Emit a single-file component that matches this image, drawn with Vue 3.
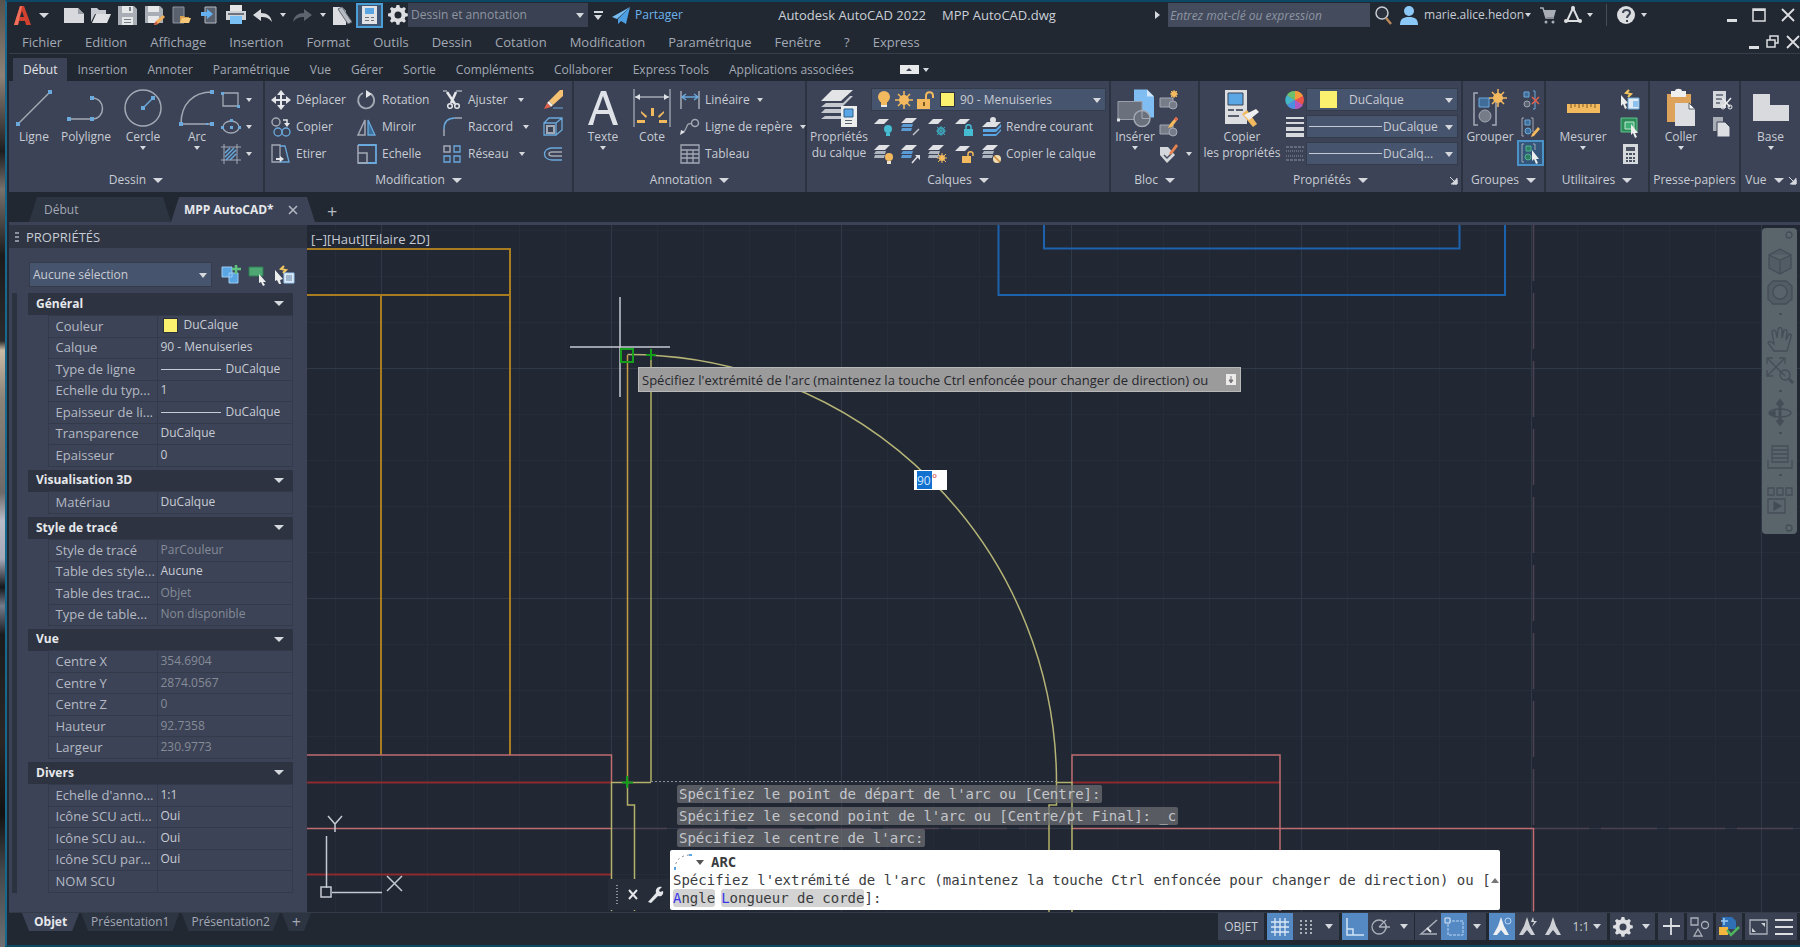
<script setup>
import { h } from 'vue'

const G = '#a3a9b4'
const B = '#6aa9dc'
const O = '#f3b95f'
const sheets = (c = '#aeb6c0') =>
  `<path d="M5 1h11l-5 5H0z" fill="#dfe1e4"/><path d="M2 7h10l-1 3H0zM1 11h10l-1 3H0z" fill="${c}"/>`
const one = '<path d="M5 2h10l-5 5H0z" fill="#dfe1e4"/>'
const person = 'M9 0l3 9 5 9h-4l-4-5-4 5H1l5-9z'
const gear = (c, hole) =>
  `<path d="M8 0h3l.6 2.6 2 .8L16 2l2 2-1.4 2.4.8 2 2.6.6v3l-2.6.6-.8 2L18 17l-2 2-2.4-1.4-2 .8L11 21H8l-.6-2.6-2-.8L3 19l-2-2 1.4-2.4-.8-2L-1 12V9l2.6-.6.8-2L1 4l2-2 2.4 1.4 2-.8z" transform="translate(1 0) scale(.94)" fill="${c}"/><circle cx="10" cy="10" r="3.5" fill="${hole}"/>`

const icons = {
  logo: [17, 19, '<path d="M0 19L6 0h4l7 19h-5l-1-4H5l-1 4zM6 11h4L8 5z" fill="#d2402f"/><path d="M6 0h2L4 19H0z" fill="#f0705c"/>'],
  new: [20, 17, '<path d="M0 1h14l6 6v9H0z" fill="#d8d9dc"/><path d="M14 1v6h6z" fill="#9b9fa8"/>'],
  open: [20, 17, '<path d="M0 1h6l2 2h7v4H4L0 15z" fill="#c7cad0"/><path d="M5 7h15l-4 9H1z" fill="#dfe0e3"/>'],
  save: [19, 19, '<path d="M0 0h16l3 3v16H0z" fill="#a9adb5"/><path d="M4 0h11v7H4z" fill="#e6e7e9"/><path d="M4 11h11v8H4z" fill="#e6e7e9"/><path d="M6 13h7v1H6zM6 16h7v1H6zM11 1h2v4h-2z" fill="#767c88"/>'],
  saveas: [20, 19, '<path d="M0 0h15l3 3v14H0z" fill="#a9adb5"/><path d="M3 0h11v6H3z" fill="#e6e7e9"/><path d="M3 10h11v7H3z" fill="#e6e7e9"/><path d="M18 9l2 2-7 7-4 1 2-4z" fill="#f0b05c"/><path d="M11 15l-2 4 4-1z" fill="#d0584a"/>'],
  mopen: [19, 18, '<path d="M1 1h11v16H1z" fill="#59616f" stroke="#8d939e"/><path d="M8 10h4l1 1h4v6H8z" fill="#d9a24e"/><path d="M10 12h9l-2 5H8z" fill="#f7c877"/>'],
  msave: [16, 18, '<path d="M4 1h11v16H4z" fill="#59616f" stroke="#b5bac2"/><path d="M0 6h6V3l6 5-6 5v-3H0z" fill="#63b1f0"/>'],
  print: [20, 20, '<path d="M4 0h12v6H4z" fill="#e3e4e6"/><path d="M0 6h20v9H0z" fill="#cfd1d5"/><path d="M4 11h12v8H4z" fill="#79c0f5"/><path d="M2 8h16v2H2z" fill="#6b7280"/>'],
  undo: [19, 13, '<path d="M8 0v4c6 0 10 3 11 9-3-4-6-5-11-5v4L0 6z" fill="#d8dadd"/>'],
  redo: [19, 13, '<path d="M11 0v4C5 4 1 7 0 13c3-4 6-5 11-5v4l8-6z" fill="#5d6470"/>'],
  sheet: [19, 19, '<path d="M0 1h9l4 4v14H0z" fill="#dcdde0"/><path d="M5 3l4-2 10 15-4 2z" fill="#b6bac1" stroke="#5f6673"/>'],
  toggle: [15, 18, '<path d="M0 0h15v18H0z" fill="#e0e2e5"/><path d="M3 2h9v6H3z" fill="#5aa6e4"/><path d="M3 11h4v1H3zM3 14h4v1H3zM9 11h3v1H9zM9 14h3v1H9z" fill="#69717f"/>'],
  gear: [20, 20, gear('#dcdee1', '#212832')],
  plane: [18, 17, '<path d="M18 0L0 10l5 2z" fill="#78bdf2"/><path d="M18 0L6 12v5l3-3 5 3z" fill="#4c9fe2"/>'],
  search: [17, 19, '<circle cx="7" cy="7" r="6" fill="#2b323e" stroke="#c9ccd2" stroke-width="1.5"/><path d="M11 12l5 6" stroke="#b9875a" stroke-width="2.5"/>'],
  user: [18, 19, '<circle cx="9" cy="5" r="5" fill="#8cc8f7"/><path d="M0 19c0-6 3-8 9-8s9 2 9 8z" fill="#8cc8f7"/>'],
  cart: [16, 17, '<path d="M0 1h3l3 10h8" fill="none" stroke="#a9adb5" stroke-width="1.5"/><path d="M3 3h13l-2 7H6z" fill="#a9adb5"/><circle cx="6" cy="15" r="1.5" fill="#a9adb5"/><circle cx="13" cy="15" r="1.5" fill="#a9adb5"/>'],
  tri: [18, 18, '<path d="M9 2L3 15h12z" fill="none" stroke="#dcdee1" stroke-width="2"/><circle cx="9" cy="2" r="2" fill="#dcdee1"/><circle cx="2" cy="15" r="2" fill="#dcdee1"/><circle cx="16" cy="15" r="2" fill="#dcdee1"/>'],
  help: [19, 19, '<circle cx="9" cy="9" r="9" fill="#dcdde0"/><path d="M6 7c0-4 7-4 7 0 0 2-3 2-3 5M10 14v2" fill="none" stroke="#3a4250" stroke-width="2"/>'],
  min: [10, 14, '<path d="M0 11h10v3H0z" fill="#dcdee1"/>'],
  max: [14, 14, '<path d="M1 1h12v12H1z" fill="none" stroke="#dcdee1" stroke-width="1.5"/><path d="M1 1h12v2H1z" fill="#dcdee1"/>'],
  close: [14, 14, '<path d="M1 1l12 12M13 1L1 13" stroke="#dcdee1" stroke-width="1.8"/>'],
  restore: [13, 13, '<path d="M4 5V1h8v7H9M1 5h8v7H1z" fill="none" stroke="#dcdee1" stroke-width="1.5"/>'],
  cam: [19, 9, '<path d="M0 0h19v9H0z" fill="#e8e9eb"/><path d="M9 3l3 3H6z" fill="#3a4250"/>'],
  line: [38, 38, `<path d="M3 35L35 3" stroke="${G}" stroke-width="1.5"/><path d="M1 33h4v4H1zM33 1h4v4h-4z" fill="${B}"/>`],
  pline: [38, 38, `<path d="M2 30h23c14 0 14-21 0-21" fill="none" stroke="${G}" stroke-width="1.5"/><path d="M0 28h4v4H0zM23 28h4v4h-4zM23 7h4v4h-4z" fill="${B}"/>`],
  circle: [38, 38, `<circle cx="19" cy="19" r="18" fill="none" stroke="${G}" stroke-width="1.5"/><path d="M19 19L29 9" stroke="${B}" stroke-width="1.5"/><path d="M17 17h4v4h-4zM27 7h4v4h-4z" fill="${B}"/>`],
  arc: [36, 38, `<path d="M2 35C2 15 14 3 33 3M2 35h31" fill="none" stroke="${G}" stroke-width="1.5"/><path d="M0 33h4v4H0zM31 1h4v4h-4zM31 33h4v4h-4zM27 34h2v2h-2z" fill="${B}"/>`],
  rect: [20, 18, `<path d="M2 2h15v13H2z" fill="none" stroke="${G}" stroke-width="1.3"/><path d="M0 1h3v3H0zM16 14h3v3h-3z" fill="${B}"/>`],
  ell: [20, 18, `<ellipse cx="10" cy="9" rx="8" ry="6" fill="none" stroke="${G}" stroke-width="1.3"/><path d="M9 8h3v3H9zM0 8h3v3H0zM17 8h3v3h-3zM9 1h3v3H9z" fill="${B}"/>`],
  hatch: [20, 20, `<path d="M3 0v20M16 0v20M0 3h20M0 16h20" stroke="${G}"/><path d="M4 9l5-5M4 13l9-9M5 16l10-10M9 16l6-6" stroke="${B}" stroke-width="1.5"/>`],
  move: [20, 20, '<path d="M10 0l4 5h-3v4h4V6l5 4-5 4v-3h-4v4h3l-4 5-4-5h3v-4H5v3l-5-4 5-4v3h4V5H6z" fill="#e4e6e9"/>'],
  copy: [20, 20, `<circle cx="5" cy="5" r="4" fill="none" stroke="${G}" stroke-width="1.5"/><path d="M12 3h4v4" fill="none" stroke="#e4e6e9" stroke-width="1.5"/><path d="M13 6h6l-3 4z" fill="#e4e6e9"/><circle cx="7" cy="15" r="4" fill="none" stroke="${B}" stroke-width="1.3"/><circle cx="15" cy="15" r="4" fill="none" stroke="${B}" stroke-width="1.3"/>`],
  stretch: [20, 20, `<path d="M1 1h8v17H1z" fill="none" stroke="${G}" stroke-width="1.3"/><path d="M9 2h5l4 16H9" fill="none" stroke="${B}" stroke-width="1.3"/><path d="M5 14h4v-2l4 3-4 3v-2H5z" fill="#e4e6e9"/>`],
  rotate: [20, 20, `<path d="M14 4a8 8 0 1 1-8-1" fill="none" stroke="${G}" stroke-width="1.8"/><path d="M9 0l6 4-6 4z" fill="#e4e6e9"/>`],
  mirror: [20, 20, `<path d="M8 3v15H1z" fill="none" stroke="${G}" stroke-width="1.5"/><path d="M11 3v15h7z" fill="#3b6f9c" stroke="${B}" stroke-width="1.3"/>`],
  scale: [20, 20, `<path d="M1 1h18v18H1" fill="none" stroke="${B}" stroke-width="1.8"/><path d="M1 1v8M1 9h9v10H1z" fill="none" stroke="${G}" stroke-width="1.5"/>`],
  trim: [20, 20, `<path d="M0 1h4M13 1h6" stroke="${G}" stroke-width="1.5"/><path d="M4 2l8 12M13 2L8 13" stroke="#e4e6e9" stroke-width="2.5"/><circle cx="7" cy="16" r="2.3" fill="none" stroke="#e4e6e9" stroke-width="1.5"/><circle cx="14" cy="16" r="2.3" fill="none" stroke="#e4e6e9" stroke-width="1.5"/>`],
  fillet: [20, 20, `<path d="M1 12C1 5 5 1 12 1" fill="none" stroke="${B}" stroke-width="1.5"/><path d="M12 1h7M1 12v7" stroke="${G}" stroke-width="1.5"/>`],
  array: [20, 20, `<path d="M1 2h6v6H1z" fill="none" stroke="${G}" stroke-width="1.5"/><path d="M11 2h6v6h-6zM1 12h6v6H1zM11 12h6v6h-6z" fill="none" stroke="${B}" stroke-width="1.3"/>`],
  erase: [20, 20, '<path d="M17 0h3v6L10 15l-4-4z" fill="#f5c273"/><path d="M6 11l4 4-2 2-4-4z" fill="#f2e9df"/><path d="M4 13l4 4-7 2z" fill="#e0604c"/><path d="M10 18h10" stroke="#6aa9dc"/>'],
  box: [20, 20, `<path d="M1 6h12v12H1zM1 6l5-5h13v12l-6 5M13 6l6-5" fill="none" stroke="${B}" stroke-width="1.3"/><path d="M4 9h7v7H4z" fill="none" stroke="${G}" stroke-width="2"/>`],
  offset: [20, 16, `<path d="M19 2H9c-10 0-10 12 0 12h10" fill="none" stroke="${B}" stroke-width="1.3"/><path d="M19 6H9c-4 0-4 4 0 4h10" fill="none" stroke="${G}" stroke-width="1.5"/>`],
  bigA: [30, 36, '<path d="M0 35L13 1h5l12 34h-5l-4-11H8L5 35zM10 20h10L15 6z" fill="#dfe2e6"/>'],
  dim: [38, 38, `<path d="M1 0v38M37 0v38M2 8h34" stroke="${G}" stroke-width="1.3"/><path d="M2 8l5-3v6zM36 8l-5-3v6z" fill="#dfe2e6"/><path d="M18 19h3v8h-3zM8 22l6 5-1 2-5-5zM31 22l-6 5 1 2 5-5zM4 31h8v3H4zM26 31h8v3h-8z" fill="${O}"/>`],
  linear: [20, 20, `<path d="M1 1v18M19 1v18" stroke="${G}" stroke-width="1.5"/><path d="M2 7h16M6 4L2 7l4 3M14 4l4 3-4 3" fill="none" stroke="${B}" stroke-width="1.5"/>`],
  leader: [20, 18, `<circle cx="15" cy="5" r="3.5" fill="none" stroke="${G}" stroke-width="1.5"/><path d="M12 6C5 4 8 12 3 14" fill="none" stroke="${G}" stroke-width="1.3"/><path d="M0 17l1-5 4 2z" fill="#dfe2e6"/>`],
  table: [20, 20, `<path d="M1 1h18v18H1zM1 6h18M1 10h18M1 14h18M7 6v13M13 6v13" fill="none" stroke="${G}" stroke-width="1.3"/>`],
  layers: [38, 38, '<path d="M12 1h21L21 12H1z" fill="#e3e4e6"/><path d="M6 14h17l7-7h3l-11 11H1zM5 20h19l-3 4H1zM5 27h16v3H1z" fill="#c5c9cf"/><path d="M21 17h16v21H21z" fill="#eceded"/><path d="M24 20h9v8h-9z" fill="#5ba7e5" stroke="#2c5e8b"/><path d="M25 31h7v1h-7zM25 34h7v1h-7z" fill="#59616f"/>'],
  bulb: [14, 18, `<circle cx="7" cy="6" r="6" fill="${O}"/><path d="M4 11h6v3H4z" fill="${O}"/><path d="M4 14h6v2H4z" fill="#e7e8ea"/>`],
  sun: [18, 18, `<circle cx="9" cy="9" r="5" fill="${O}"/><path d="M9 0v18M0 9h18M3 3l12 12M15 3L3 15" stroke="${O}" stroke-width="1.5"/>`],
  unlock: [18, 18, `<path d="M0 8h13v10H0z" fill="${O}"/><path d="M9 8V5c0-5 7-5 7 0v2" fill="none" stroke="${O}" stroke-width="2"/><path d="M6 11h2v4H6z" fill="#7a5a24"/>`],
  l1: [20, 20, one + '<circle cx="14" cy="12" r="4" fill="#45bcd2"/><path d="M12 16h4v3h-4z" fill="#45bcd2"/>'],
  l2: [20, 20, sheets('#5a9bd5') + '<path d="M12 18l6-6" stroke="#c5c9cf" stroke-width="1.5"/>'],
  l3: [20, 20, one + '<circle cx="13" cy="14" r="3" fill="none" stroke="#3d9fb4" stroke-width="2"/><path d="M13 9v10M8 14h10M9 10l8 8M17 10l-8 8" stroke="#3d9fb4"/>'],
  l4: [20, 20, one + '<path d="M9 12h9v7H9z" fill="#45bcd2"/><path d="M11 12v-2c0-3 5-3 5 0v2" fill="none" stroke="#45bcd2" stroke-width="1.5"/>'],
  l5: [20, 20, '<path d="M5 5h14l-5 5H0z" fill="#dfe1e4"/><path d="M1 12h13l5-5v3l-5 5H1zM1 17h13l5-5v2l-5 5H1z" fill="#5aa6e4"/><circle cx="11" cy="3" r="3" fill="#dfe1e4"/>'],
  l6: [20, 20, sheets() + `<circle cx="15" cy="13" r="4" fill="${O}"/><path d="M13 17h4v3h-4z" fill="#e9e2d3"/>`],
  l7: [20, 20, sheets('#5a9bd5') + '<path d="M11 19l6-7" stroke="#dfe1e4" stroke-width="1.5"/><path d="M14 11h5v5z" fill="#dfe1e4"/>'],
  l8: [20, 20, sheets() + `<circle cx="14" cy="14" r="3" fill="${O}"/><path d="M14 9v10M9 14h10M10 10l8 8M18 10l-8 8" stroke="${O}"/>`],
  l9: [20, 20, one + `<path d="M7 12h9v7H7z" fill="${O}"/><path d="M13 12v-2c0-3 5-3 5 0v2" fill="none" stroke="${O}" stroke-width="1.5"/>`],
  l10: [20, 20, sheets() + `<circle cx="15" cy="15" r="4" fill="#f2dcae"/><path d="M12 12l6 6" stroke="#c78b3a" stroke-width="1.5"/>`],
  insert: [37, 37, '<path d="M17 0h13l7 7v21H17z" fill="#7fbdf2"/><path d="M30 0v7h7z" fill="#cfe5f8"/><path d="M1 12h24v18H1z" fill="#6a707c" stroke="#9aa0aa"/><circle cx="25" cy="29" r="8" fill="#6a707c" stroke="#a3a9b4" stroke-width="1.5"/><path d="M25 29v-8M25 29h8" stroke="#a3a9b4"/><path d="M0 29h3v3H0z" fill="#dfe2e6"/>'],
  b1: [20, 20, `<path d="M1 8h13v9H1z" fill="#767c88" stroke="${G}"/><circle cx="14" cy="15" r="4" fill="#767c88" stroke="${G}"/><circle cx="15" cy="4" r="3" fill="${O}"/><path d="M15 0v8M11 4h8M12 1l6 6M18 1l-6 6" stroke="${O}"/>`],
  b2: [20, 20, `<path d="M1 8h13v9H1z" fill="#767c88" stroke="${G}"/><circle cx="14" cy="15" r="4" fill="#767c88" stroke="${G}"/><path d="M17 0l2 2-6 8-4 1 2-4z" fill="${O}"/><path d="M17 0l2 2-2 2-2-2z" fill="#e8634f"/>`],
  b3: [20, 20, `<path d="M1 3h8l7 8-8 8-7-8z" fill="#d4d7db"/><path d="M5 11l3 3 5-5" fill="none" stroke="#4a5160" stroke-width="1.5"/><path d="M17 0l2 2-6 8-3 1 1-3z" fill="#e8834f"/>`],
  props: [36, 38, `<path d="M1 1h22v34H1z" fill="#dcdee1"/><path d="M4 4h15v12H4z" fill="#5ba7e5" stroke="#3b4456"/><path d="M4 20h6v2H4zM12 20h7v2h-7zM4 26h11v2H4z" fill="#59616f"/><path d="M18 25l5-4 10 14-4 3z" fill="${O}"/><path d="M20 26l12-6 3 3-10 8z" fill="#efefef"/>`],
  wheel: [20, 20, '<circle cx="10" cy="10" r="9" fill="#e9534a"/><path d="M10 10V1a9 9 0 0 1 8 5z" fill="#f39a3d"/><path d="M10 10l8 5a9 9 0 0 1-8 4z" fill="#b05ac0"/><path d="M10 10v9a9 9 0 0 1-8-4z" fill="#4a90e2"/><path d="M10 10l-8 5a9 9 0 0 1 0-10z" fill="#43b6c9"/><path d="M10 10L2 5a9 9 0 0 1 8-4z" fill="#6cc06a"/>'],
  lw: [18, 20, '<path d="M0 0h18v2H0zM0 5h18v2H0zM0 10h18v4H0zM0 16h18v4H0z" fill="#d5d8dd"/>'],
  lt: [18, 16, '<path d="M0 1h18M0 14h18" stroke="#8d939e" stroke-dasharray="3 1"/><path d="M0 5h18M0 10h18" stroke="#8d939e" stroke-dasharray="1 1"/>'],
  group: [36, 38, `<path d="M6 4H2v32h4M20 36h4V12" fill="none" stroke="${G}" stroke-width="1.5"/><path d="M7 9h10v9H7z" fill="#3f6d98" stroke="#6aa9dc"/><circle cx="13" cy="27" r="6" fill="#767c88" stroke="${G}"/><circle cx="26" cy="9" r="5" fill="${O}"/><path d="M26 0v18M17 9h18M20 3l12 12M32 3L20 15" stroke="${O}" stroke-width="1.5"/>`],
  g1: [20, 20, `<path d="M3 2h5v5H3z" fill="#3f6d98" stroke="${B}"/><circle cx="6" cy="14" r="3" fill="#59616f" stroke="${G}"/><path d="M12 1h2v18h-2" fill="none" stroke="${B}"/><path d="M11 7l7 7M18 7l-7 7" stroke="#e0604c" stroke-width="1.5"/>`],
  g2: [20, 20, `<path d="M3 1H1v18h2M10 1h2v14" fill="none" stroke="${G}"/><path d="M4 3h5v5H4z" fill="#3f6d98" stroke="${B}"/><circle cx="7" cy="14" r="3" fill="#3f6d98" stroke="${B}"/><path d="M17 10l2 2-6 7-3 1 1-3z" fill="${O}"/>`],
  g3: [20, 20, `<path d="M3 1H1v18h2M12 1h2v6" fill="none" stroke="${G}"/><path d="M5 3h5v5H5z" fill="#2f7d66" stroke="#50b48d"/><circle cx="7" cy="14" r="3" fill="#2f7d66" stroke="#50b48d"/><path d="M11 7l7 9h-3l2 4-2 1-2-5-2 2z" fill="#eceded"/>`],
  ruler: [33, 38, `<path d="M0 15h33v9H0z" fill="${O}"/><path d="M4 15v4M8 15v3M12 15v4M16 15v3M20 15v4M24 15v3M28 15v4" stroke="#7d5a22"/>`],
  u1: [20, 20, '<path d="M9 0l-3 3 5 1-3 3" fill="none" stroke="#f3c75f" stroke-width="2"/><path d="M1 5l7 8-3 1 2 4-2 1-2-5-2 2z" fill="#eceded"/><path d="M8 8h11v11H8z" fill="#dfeaf5" stroke="#6aa9dc"/><path d="M13 11h5v6h-5z" fill="#8cc0ee"/>'],
  u2: [20, 20, '<path d="M1 1h16v14H1z" fill="#2f8a5a" stroke="#60c48d"/><path d="M5 5h9v7H5z" fill="#3fae75" stroke="#bfe8d0"/><path d="M11 7l7 9h-3l2 4-2 1-2-5-2 2z" fill="#eceded"/>'],
  calc: [15, 20, '<path d="M0 0h15v20H0z" fill="#d5d8dd"/><path d="M3 3h9v4H3zM3 9h2v2H3zM6 9h3v2H6zM10 9h2v2h-2zM3 13h2v2H3zM6 13h3v2H6zM10 13h2v2h-2zM3 16h2v2H3zM6 16h3v2H6zM10 16h2v2h-2z" fill="#4a5160"/>'],
  paste: [30, 38, `<path d="M1 5h24v28H1z" fill="#dda35a"/><path d="M5 2h4c0-3 7-3 7 0h4v6H5z" fill="#efefef"/><path d="M9 14h14l6 6v17H9z" fill="#dcdee1"/><path d="M23 14v6h6z" fill="#fff" stroke="#59616f"/>`],
  cut: [20, 20, `<path d="M1 1h13v17H1z" fill="#d5d8dd"/><path d="M4 5h7M4 9h7M4 13h4" stroke="#59616f" stroke-width="1.5"/><path d="M10 8l8 9M19 8l-8 9" stroke="#eceded" stroke-width="1.5"/><circle cx="11" cy="17" r="2" fill="none" stroke="#eceded"/><circle cx="18" cy="17" r="2" fill="none" stroke="#eceded"/>`],
  cpy: [18, 20, '<path d="M0 0h10v14H0z" fill="#a9adb5"/><path d="M4 5h8l5 5v10H4z" fill="#dcdee1" stroke="#3c4356"/>'],
  base: [38, 38, '<path d="M1 5h17v11h19v16H1z" fill="#d8dadd"/>'],
  corner: [8, 8, '<path d="M0 0l4 4M7 1v6H1M7 3v4H3z" fill="#d5d8dd" stroke="#d5d8dd"/>'],
  p1: [20, 20, '<path d="M1 2h10v10H1zM8 8h9v10H8z" fill="#5aa6e4" stroke="#9cccf4"/><path d="M15 0v9M11 4h9" stroke="#5fc47f" stroke-width="2.5"/>'],
  p2: [20, 20, '<path d="M1 2h14v9H1z" fill="#4fa873" stroke="#2f7d53"/><path d="M11 9l7 8h-3l2 3-2 1-2-4-2 1z" fill="#eceded"/>'],
  p3: [20, 20, '<path d="M9 1l-3 3 5 1-3 3" fill="none" stroke="#f3c75f" stroke-width="2"/><path d="M0 5l8 9-3 1 1 4H4l-2-4-2 1z" fill="#eceded"/><path d="M9 8h10v10H9z" fill="#dfeaf5" stroke="#9cccf4"/><path d="M11 11h6M11 13h6M11 15h6" stroke="#5a7fa5"/>'],
  wrench: [17, 17, '<path d="M1 16l8-9c-1-4 2-7 6-6l-3 3 1 2 3-1c1 4-2 6-5 5l-7 7z" fill="#e4e6e9"/>'],
  sgrid: [20, 20, '<path d="M5 1v18M10 1v18M15 1v18M1 5h18M1 10h18M1 15h18" stroke="#dce9f6" stroke-width="1.3"/>'],
  sdots: [18, 18, '<path d="M3 3h13M3 7h13M3 11h13M3 15h13" stroke="#aab0ba" stroke-width="2" stroke-dasharray="2 3"/>'],
  sortho: [20, 20, '<path d="M2 1v17h17M2 12h6v6" fill="none" stroke="#cfe2f5" stroke-width="1.5"/>'],
  spolar: [20, 20, '<circle cx="8" cy="10" r="7" fill="none" stroke="#aab0ba" stroke-width="1.3"/><path d="M8 10h11M8 10l7-7M15 8v4" stroke="#aab0ba" stroke-width="1.3"/>'],
  siso: [20, 20, '<path d="M19 3L3 17h16" fill="none" stroke="#aab0ba" stroke-width="1.5"/><path d="M9 11l4 4" stroke="#e4e6e9" stroke-width="2"/>'],
  ssnap: [20, 20, '<path d="M4 4h15v14H4z" fill="none" stroke="#b9d6f2" stroke-dasharray="3 1"/><path d="M1 1h5v5H1z" fill="#5b8fc9" stroke="#dce9f6"/>'],
  a1: [20, 20, `<path d="${person}" fill="#eef0f2"/><circle cx="16" cy="4" r="3" fill="none" stroke="#b9d6f2"/>`],
  a2: [20, 20, `<path d="${person}" fill="#cdd0d5"/><path d="M15 0l-2 5h3l-2 5 5-6h-3z" fill="#cdd0d5"/>`],
  a3: [20, 20, `<path d="${person}" fill="#cdd0d5"/>`],
  sgear: [20, 20, gear('#dcdee1', '#3b4253')],
  plus: [17, 17, '<path d="M8 0v17M0 8h17" stroke="#dcdee1" stroke-width="1.8"/>'],
  shapes: [20, 20, '<path d="M1 1h7v7H1zM8 12l4 7H4z" fill="none" stroke="#aab0ba" stroke-width="1.3"/><circle cx="15" cy="8" r="3.5" fill="none" stroke="#aab0ba" stroke-width="1.3"/>'],
  perf: [21, 21, '<path d="M3 1h10l4 4v8H3z" fill="#2f6fb5"/><path d="M2 5h7M5 2v7" stroke="#9cccf4" stroke-width="1.5"/><path d="M0 11h9v8H0z" fill="#f3b73f"/><path d="M8 14l4 5 8-8" fill="none" stroke="#4fb45f" stroke-width="2.5"/>'],
  expand: [19, 16, '<path d="M1 1h17v14H1z" fill="none" stroke="#aab0ba" stroke-width="1.3"/><path d="M12 4h4v4zM3 9v4h4z" fill="#cdd0d5"/>'],
  burger: [18, 18, '<path d="M0 1h18v2H0zM0 8h18v2H0zM0 15h18v2H0z" fill="#dcdee1"/>'],
}

const Ic = (p) => {
  const [w, ht, s] = icons[p.n]
  return h('svg', { width: w, height: ht, viewBox: `0 0 ${w} ${ht}`, 'aria-hidden': 'true', innerHTML: s })
}
Ic.props = ['n']

const qat = [
  ['new', 'Nouveau'], ['open', 'Ouvrir'], ['save', 'Enregistrer'], ['saveas', 'Enregistrer sous'],
  ['mopen', 'Ouvrir depuis le mobile'], ['msave', 'Enregistrer sur le mobile'], ['print', 'Tracer'],
]
const menus = ['Fichier', 'Edition', 'Affichage', 'Insertion', 'Format', 'Outils', 'Dessin', 'Cotation', 'Modification', 'Paramétrique', 'Fenêtre', '?', 'Express']
const tabs = ['Début', 'Insertion', 'Annoter', 'Paramétrique', 'Vue', 'Gérer', 'Sortie', 'Compléments', 'Collaborer', 'Express Tools', 'Applications associées']
const draw = [['line', 'Ligne', 0], ['pline', 'Polyligne', 0], ['circle', 'Cercle', 1], ['arc', 'Arc', 1]]
const modify = [
  ['move', 'Déplacer', 0], ['rotate', 'Rotation', 0], ['trim', 'Ajuster', 1], ['erase', '', 0],
  ['copy', 'Copier', 0], ['mirror', 'Miroir', 0], ['fillet', 'Raccord', 1], ['box', '', 0],
  ['stretch', 'Etirer', 0], ['scale', 'Echelle', 0], ['array', 'Réseau', 1], ['offset', '', 0],
]
const annot = [['linear', 'Linéaire', 1], ['leader', 'Ligne de repère', 1], ['table', 'Tableau', 0]]
const sections = [
  ['Général', [
    ['Couleur', 'DuCalque', 'swatch'], ['Calque', '90 - Menuiseries'], ['Type de ligne', 'DuCalque', 'rule'],
    ['Echelle du typ...', '1'], ['Epaisseur de li...', 'DuCalque', 'rule'], ['Transparence', 'DuCalque'], ['Epaisseur', '0'],
  ]],
  ['Visualisation 3D', [['Matériau', 'DuCalque']]],
  ['Style de tracé', [
    ['Style de tracé', 'ParCouleur', 'dim'], ['Table des style...', 'Aucune'],
    ['Table des trac...', 'Objet', 'dim'], ['Type de table...', 'Non disponible', 'dim'],
  ]],
  ['Vue', [
    ['Centre X', '354.6904', 'dim'], ['Centre Y', '2874.0567', 'dim'], ['Centre Z', '0', 'dim'],
    ['Hauteur', '92.7358', 'dim'], ['Largeur', '230.9773', 'dim'],
  ]],
  ['Divers', [
    ["Echelle d'anno...", '1:1'], ['Icône SCU acti...', 'Oui'], ['Icône SCU au...', 'Oui'],
    ['Icône SCU par...', 'Oui'], ['NOM SCU', ''],
  ]],
]
const history = [
  "Spécifiez le point de départ de l'arc ou [Centre]:",
  "Spécifiez le second point de l'arc ou [Centre/pt Final]: _c",
  "Spécifiez le centre de l'arc:",
]
</script>

<template>
  <div class="desk">
    <div class="win">
      <header class="title">
        <button class="logo" aria-label="Menu de l'application"><Ic n="logo" /><i class="ar" /></button>
        <button v-for="q in qat" :key="q[0]" class="q" :aria-label="q[1]"><Ic :n="q[0]" /></button>
        <button class="q" aria-label="Annuler"><Ic n="undo" /></button>
        <button class="qa" aria-label="Liste annuler"><i class="ar sm" /></button>
        <button class="q" aria-label="Rétablir"><Ic n="redo" /></button>
        <button class="qa" aria-label="Liste rétablir"><i class="ar sm" /></button>
        <button class="q" aria-label="Jeu de feuilles"><Ic n="sheet" /></button>
        <button class="q on" aria-label="Palette des propriétés"><Ic n="toggle" /></button>
        <span class="ws"><Ic n="gear" /></span>
        <span class="drop space"><select aria-label="Espace de travail"><option>Dessin et annotation</option></select><i class="ar" /></span>
        <button class="qa more" aria-label="Personnaliser"><i class="ar" /></button>
        <button class="share"><Ic n="plane" />Partager</button>
        <span class="name"><span>Autodesk AutoCAD 2022</span><span>MPP AutoCAD.dwg</span></span>
        <i class="rt" />
        <input class="find" type="text" placeholder="Entrez mot-clé ou expression" aria-label="Rechercher" />
        <button class="tb find-b" aria-label="Lancer la recherche"><Ic n="search" /></button>
        <button class="tb user"><Ic n="user" />marie.alice.hedon<i class="ar sm" /></button>
        <button class="tb" aria-label="Boutique"><Ic n="cart" /></button>
        <button class="tb" aria-label="Autodesk App Store"><Ic n="tri" /><i class="ar sm" /></button>
        <i class="vr" />
        <button class="tb" aria-label="Aide"><Ic n="help" /><i class="ar sm" /></button>
        <span class="wb">
          <button aria-label="Réduire"><Ic n="min" /></button>
          <button aria-label="Agrandir"><Ic n="max" /></button>
          <button aria-label="Fermer"><Ic n="close" /></button>
        </span>
      </header>

      <nav class="menu">
        <button v-for="m in menus" :key="m">{{ m }}</button>
        <span class="mdi">
          <button aria-label="Réduire le dessin"><Ic n="min" /></button>
          <button aria-label="Restaurer le dessin"><Ic n="restore" /></button>
          <button aria-label="Fermer le dessin"><Ic n="close" /></button>
        </span>
      </nav>

      <nav class="tabs">
        <button v-for="(t, i) in tabs" :key="t" :class="{ act: !i }">{{ t }}</button>
        <button class="cam" aria-label="Réduire le ruban"><Ic n="cam" /><i class="ar sm" /></button>
      </nav>

      <div class="ribbon">
        <section>
          <div class="body draw">
            <button v-for="d in draw" :key="d[0]" class="big"><Ic :n="d[0]" /><span>{{ d[1] }}</span><i v-if="d[2]" class="ar sm" /></button>
            <div class="stack">
              <button class="s" aria-label="Rectangle"><Ic n="rect" /><i class="ar sm" /></button>
              <button class="s" aria-label="Ellipse"><Ic n="ell" /><i class="ar sm" /></button>
              <button class="s" aria-label="Hachures"><Ic n="hatch" /><i class="ar sm" /></button>
            </div>
          </div>
          <footer>Dessin<i class="ar" /></footer>
        </section>

        <section>
          <div class="body mod">
            <button v-for="m in modify" :key="m[0]" class="s" :aria-label="m[1] || m[0]"><Ic :n="m[0]" /><span v-if="m[1]">{{ m[1] }}</span><i v-if="m[2]" class="ar sm" /></button>
          </div>
          <footer>Modification<i class="ar" /></footer>
        </section>

        <section>
          <div class="body ann">
            <button class="big"><Ic n="bigA" /><span>Texte</span><i class="ar sm" /></button>
            <button class="big"><Ic n="dim" /><span>Cote</span></button>
            <div class="stack">
              <button v-for="a in annot" :key="a[0]" class="s"><Ic :n="a[0]" /><span>{{ a[1] }}</span><i v-if="a[2]" class="ar sm" /></button>
            </div>
          </div>
          <footer>Annotation<i class="ar" /></footer>
        </section>

        <section>
          <div class="body lay">
            <button class="big"><Ic n="layers" /><span>Propriétés<br />du calque</span></button>
            <div class="stack">
              <span class="drop layer">
                <span class="over"><Ic n="bulb" /><Ic n="sun" /><Ic n="unlock" /><i class="sw" /></span>
                <select aria-label="Calque courant"><option>90 - Menuiseries</option></select><i class="ar" />
              </span>
              <div class="lr">
                <button v-for="n in 4" :key="n" :aria-label="'Outil de calque ' + n"><Ic :n="'l' + n" /></button>
                <button><Ic n="l5" />Rendre courant</button>
              </div>
              <div class="lr">
                <button v-for="n in 4" :key="n" :aria-label="'Outil de calque ' + (n + 4)"><Ic :n="'l' + (n + 5)" /></button>
                <button><Ic n="l10" />Copier le calque</button>
              </div>
            </div>
          </div>
          <footer>Calques<i class="ar" /></footer>
        </section>

        <section>
          <div class="body blk">
            <button class="big"><Ic n="insert" /><span>Insérer</span><i class="ar sm" /></button>
            <div class="stack">
              <button class="s" aria-label="Créer un bloc"><Ic n="b1" /></button>
              <button class="s" aria-label="Modifier le bloc"><Ic n="b2" /></button>
              <button class="s" aria-label="Attributs"><Ic n="b3" /><i class="ar sm" /></button>
            </div>
          </div>
          <footer>Bloc<i class="ar" /></footer>
        </section>

        <section>
          <div class="body prp">
            <button class="big"><Ic n="props" /><span>Copier<br />les propriétés</span></button>
            <div class="stack mid">
              <span><Ic n="wheel" /></span><span><Ic n="lw" /></span><span><Ic n="lt" /></span>
            </div>
            <div class="stack sel">
              <span class="drop c"><select aria-label="Couleur"><option>DuCalque</option></select><i class="ar" /></span>
              <span class="drop l"><select aria-label="Epaisseur de ligne"><option>DuCalque</option></select><i class="ar" /></span>
              <span class="drop l"><select aria-label="Type de ligne"><option>DuCalq...</option></select><i class="ar" /></span>
            </div>
          </div>
          <footer>Propriétés<i class="ar" /><button class="cn" aria-label="Ouvrir les propriétés"><Ic n="corner" /></button></footer>
        </section>

        <section>
          <div class="body grp">
            <button class="big"><Ic n="group" /><span>Grouper</span></button>
            <div class="stack">
              <button class="s" aria-label="Dissocier"><Ic n="g1" /></button>
              <button class="s" aria-label="Modifier le groupe"><Ic n="g2" /></button>
              <button class="s hot" aria-label="Sélection de groupe"><Ic n="g3" /></button>
            </div>
          </div>
          <footer>Groupes<i class="ar" /></footer>
        </section>

        <section>
          <div class="body utl">
            <button class="big"><Ic n="ruler" /><span>Mesurer</span><i class="ar sm" /></button>
            <div class="stack mid">
              <button aria-label="Sélection rapide"><Ic n="u1" /></button>
              <button aria-label="Tout sélectionner"><Ic n="u2" /></button>
              <button aria-label="Calculatrice"><Ic n="calc" /></button>
            </div>
          </div>
          <footer>Utilitaires<i class="ar" /></footer>
        </section>

        <section>
          <div class="body pst">
            <button class="big"><Ic n="paste" /><span>Coller</span><i class="ar sm" /></button>
            <div class="stack mid">
              <button aria-label="Couper"><Ic n="cut" /></button>
              <button aria-label="Copier le clip"><Ic n="cpy" /></button>
            </div>
          </div>
          <footer>Presse-papiers</footer>
        </section>

        <section class="last">
          <div class="body vue">
            <button class="big"><Ic n="base" /><span>Base</span><i class="ar sm" /></button>
          </div>
          <footer>Vue<i class="ar" /><button class="cn" aria-label="Options de vue"><Ic n="corner" /></button></footer>
        </section>
      </div>

      <nav class="docs">
        <button class="doc"><span>Début</span></button>
        <button class="doc act"><span>MPP AutoCAD*</span><svg width="10" height="10" viewBox="0 0 10 10"><path d="M1 1l8 8M9 1L1 9" stroke="#b5bac2" stroke-width="1.5" /></svg></button>
        <button class="add" aria-label="Nouveau dessin">+</button>
      </nav>

      <main class="work">
        <aside class="props">
          <h2><i class="grip" />PROPRIÉTÉS</h2>
          <div class="ptool">
            <span class="drop"><select aria-label="Sélection"><option>Aucune sélection</option></select><i class="ar" /></span>
            <button aria-label="Ajouter à la sélection"><Ic n="p1" /></button>
            <button aria-label="Choisir des objets"><Ic n="p2" /></button>
            <button aria-label="Sélection rapide"><Ic n="p3" /></button>
          </div>
          <div class="plist">
            <i class="bar" />
            <div class="tables">
              <table v-for="s in sections" :key="s[0]">
                <colgroup><col class="c1" /><col class="c2" /><col /></colgroup>
                <thead><tr><th colspan="3"><span class="hd">{{ s[0] }}<i class="ar" /></span></th></tr></thead>
                <tbody>
                  <tr v-for="r in s[1]" :key="r[0]">
                    <td class="gut" />
                    <th scope="row">{{ r[0] }}</th>
                    <td :class="{ dim: r[2] === 'dim' }"><i v-if="r[2] === 'swatch'" class="sw" /><i v-if="r[2] === 'rule'" class="rule" />{{ r[1] }}</td>
                  </tr>
                </tbody>
              </table>
            </div>
          </div>
        </aside>

        <div class="canvas">
          <svg class="plan" width="100%" height="100%">
            <defs>
              <pattern id="minor" x="74" y="5" width="46" height="46" patternUnits="userSpaceOnUse">
                <path d="M.5 0v46M0 .5h46" stroke="#252d39" fill="none" />
              </pattern>
              <pattern id="major" x="74" y="143" width="230" height="230" patternUnits="userSpaceOnUse">
                <path d="M.5 0v230M0 .5h230" stroke="#2f3947" fill="none" />
              </pattern>
            </defs>
            <rect width="100%" height="100%" fill="url(#minor)" />
            <rect width="100%" height="100%" fill="url(#major)" />
            <g transform="translate(-307 -225)" fill="none" stroke-width="1.5">
              <path d="M611 828.5h438M1533 828.5h700" stroke="#4c4251" stroke-dasharray="56 12" />
              <path d="M1533.5 225v603" stroke="#4c4251" stroke-dasharray="56 12" />
              <path d="M307 249h203v506M307 295h203M381 295v460" stroke="#a87d22" stroke-width="2" />
              <path d="M998.5 225v70h506.500v-70M1044 225v23.500h415.500v-23.500" stroke="#1c62ac" stroke-width="2" />
              <path d="M307 782.5h304M307 874.5h304M1072 782.5h208" stroke="#8c2a2f" stroke-width="2" />
              <path d="M307 755h304.500v27M307 828.5h304M1072 782v-27h208v156M1072 828.5h461.500v83" stroke="#c06c72" />
              <path d="M611.500 911v-128.500h39.500M634.500 911v-106h-7v-23M1057 782.5h15v130M1056.500 782v23h-7.500v110M651 355v427" stroke="#b3b16a" />
              <path d="M627.500 355v427" stroke="#c69a43" />
              <path d="M627.500 354.500A429 428 0 0 1 1056.500 782.500" stroke="#b5b476" />
              <path d="M651 781.5h405" stroke="#8b9098" stroke-dasharray="2 2" stroke-width="1" />
              <path d="M620 297v100M570 347h100" stroke="#c5c9d2" />
              <path d="M621 349h12v13h-12zM651 349v11M646 355h10M627 776v12M622 782.5h11" stroke="#15a01c" stroke-width="2" />
              <path d="M326.500 836v52M332 892.500h50M321 887h10v10h-10zM328 816l7 8 7-8M335 824v8M387 876l15 15M402 876l-15 15" stroke="#c5c9d2" />
            </g>
          </svg>
          <span class="vp">[−][Haut][Filaire 2D]</span>
          <div class="tip">Spécifiez l'extrémité de l'arc (maintenez la touche Ctrl enfoncée pour changer de direction) ou
            <svg width="10" height="11" viewBox="0 0 10 11"><path d="M0 0h10v11H0z" fill="#ecebea" /><path d="M5 2v5M3 6l2 3 2-3z" stroke="#77767a" fill="#77767a" /></svg>
          </div>
          <label class="ang"><input value="90" aria-label="Angle" /><span>°</span></label>

          <div class="hist"><div v-for="l in history" :key="l"><span>{{ l }}</span></div></div>
          <div class="cmd">
            <div class="dock">
              <i class="grip" />
              <button aria-label="Fermer la ligne de commande"><svg width="10" height="11" viewBox="0 0 10 11"><path d="M1 1l8 9M9 1L1 10" stroke="#e4e6e9" stroke-width="2" /></svg></button>
              <button aria-label="Personnaliser"><Ic n="wrench" /></button>
            </div>
            <div class="box">
              <div class="arc"><svg width="20" height="18" viewBox="0 0 20 18"><path d="M2 16C2 7 8 2 17 2" fill="none" stroke="#8a9099" stroke-dasharray="2 3" /><path d="M1 14h2v3H1zM16 1h3v2h-3z" fill="#5aa6e4" /></svg><i class="ar" /><b>ARC</b></div>
              <div class="ln"><span>Spécifiez l'extrémité de l'arc (maintenez la touche Ctrl enfoncée pour changer de direction) ou [</span><i class="up" /></div>
              <div><button><em>A</em>ngle</button><button class="second"><em>L</em>ongueur de corde</button>]:</div>
            </div>
          </div>

          <div class="nav" role="toolbar" aria-label="Barre de navigation">
            <svg width="35" height="306" viewBox="0 0 35 306" fill="none" stroke="#454e57" stroke-width="1.3">
              <circle cx="27" cy="7" r="3" /><circle cx="27" cy="300" r="3" />
              <path d="M18 21l11 6v13l-11 6-11-6V27zM7 27l11 5 11-5M18 32v14" fill="#525c64" />
              <path d="M11 53h13l6 5v13l-6 5H11l-5-5V58z" fill="#525c64" /><circle cx="18" cy="64" r="7" fill="#59636b" />
              <path d="M17 86h3M17 163h3M17 205h3M17 247h3" stroke-width="2" />
              <path d="M12 123l-6-8c1-3 4-1 6 1l-2-12c1-3 3-2 4 0l1 6 1-9c1-2 3-2 4 0l0 9 2-8c2-1 3 0 3 2l-1 8 3-6c2 0 3 1 2 3l-4 14z" />
              <path d="M6 131l17 17M22 131L6 147M5 136v-6h6M5 142v6h6M23 136v-6h-6" /><circle cx="23" cy="147" r="5" /><path d="M27 151l4 4" stroke-width="3" />
              <path d="M18 174v21M15 177l3-4 3 4M15 192l3 4 3-4" stroke-width="3" /><ellipse cx="18" cy="185" rx="11" ry="4" /><path d="M8 185l5 4v-6z" fill="#434c55" />
              <path d="M10 218h16v16H10zM10 222h16M10 226h16M10 230h16M6 232v8h24v-8" />
              <path d="M6 260h6v7H6zM15 260h6v7h-6zM24 260h6v7h-6zM6 271h17v14H6z" /><path d="M12 274l7 4-7 4z" fill="#434c55" />
            </svg>
          </div>
        </div>
      </main>

      <footer class="status">
        <nav class="lts">
          <button class="act">Objet</button><button>Présentation1</button><button>Présentation2</button><button class="pl" aria-label="Nouvelle présentation">+</button>
        </nav>
        <div class="sb">
          <span class="g"><button class="obj">OBJET</button></span>
          <span class="g"><button class="on" aria-label="Grille"><Ic n="sgrid" /></button><button aria-label="Résolution"><Ic n="sdots" /></button><button class="a" aria-label="Options de résolution"><i class="ar" /></button></span>
          <span class="g"><button class="on" aria-label="Ortho"><Ic n="sortho" /></button><button aria-label="Polaire"><Ic n="spolar" /></button><button class="a" aria-label="Options polaires"><i class="ar" /></button></span>
          <span class="g tight"><button aria-label="Repérage"><Ic n="siso" /></button><button class="on" aria-label="Accrochage"><Ic n="ssnap" /></button><button class="n" aria-label="Options d'accrochage"><i class="ar" /></button></span>
          <span class="g"><button class="on" aria-label="Visibilité des annotations"><Ic n="a1" /></button><button aria-label="Échelle automatique"><Ic n="a2" /></button><button aria-label="Échelle d'annotation"><Ic n="a3" /></button><button class="sc">1:1<i class="ar" /></button></span>
          <span class="g"><button aria-label="Espace de travail"><Ic n="sgear" /></button><button class="n" aria-label="Liste des espaces"><i class="ar" /></button></span>
          <span class="g"><button aria-label="Moniteur"><Ic n="plus" /></button></span>
          <span class="g"><button aria-label="Isoler"><Ic n="shapes" /></button></span>
          <span class="g"><button aria-label="Performances"><Ic n="perf" /></button></span>
          <span class="g"><button aria-label="Plein écran"><Ic n="expand" /></button><button aria-label="Personnalisation"><Ic n="burger" /></button></span>
        </div>
      </footer>
    </div>
  </div>
</template>

<style>
body { margin: 0; background: #212832; }
</style>

<style scoped>
* { box-sizing: border-box; }
svg { display: block; flex: none; overflow: visible; }
button, input, select { font: inherit; color: inherit; background: none; border: 0; padding: 0; margin: 0; border-radius: 0; outline: 0; }
button { display: flex; align-items: center; white-space: nowrap; cursor: pointer; }
.desk {
  min-height: 100vh; display: flex; padding-left: 5px;
  background: linear-gradient(#57524d 0, #8d8177 8%, #1d1d1f 16%, #77716c 20%, #1c1b1c 27%, #2a2a2c 36%, #c9bba6 37%, #8b8378 42%, #6e6a68 52%, #b8bcc8 55%, #a5a9b8 59%, #14161a 62%, #737c8a 64%, #1a1b1e 67%, #2b2624 78%, #121212 86%, #45484b 92%, #6d7073 100%);
  font-family: "Open Sans", "Noto Sans", sans-serif; font-size: 12px; line-height: 16px; color: #c8ccd4;
}
.win {
  flex: 1; min-width: 0; display: flex; flex-direction: column; padding-left: 2px;
  background: #212832; border: solid #0c4866; border-width: 2px 0 2px 2px; border-left-color: #17678f;
}
.ar { display: inline-block; flex: none; border: 5px solid transparent; border-top-color: #d5d8dd; border-bottom: 0; }
.ar.sm { border-width: 4px; border-bottom-width: 0; border-left-width: 3px; border-right-width: 3px; }
.drop { position: relative; display: flex; align-items: center; background: #47546d; border: 1px solid #343c4c; min-width: 0; }
.drop select { appearance: none; width: 100%; height: 100%; padding: 0 14px 0 3px; white-space: nowrap; cursor: pointer; }
.drop option { color: #222; }
.drop .ar { position: absolute; right: 4px; top: calc(50% - 2px); pointer-events: none; border-width: 5px 4px 0; }

.title { display: flex; align-items: center; height: 26px; }
.logo { width: 51px; padding-left: 5px; gap: 8px; }
.q { width: 27px; height: 25px; justify-content: center; }
.qa { width: 13px; justify-content: center; }
.q.on { border: 2px solid #4a9fd6; background: #3d5572; }
.ws { width: 20px; margin-left: 5px; display: flex; justify-content: center; }
.space { width: 180px; height: 24px; background: #3a4152; border: 0; color: #8f95a1; }
.more { width: 20px; flex-direction: column; gap: 2px; }
.more::before { content: ""; width: 9px; height: 2px; background: #d5d8dd; }
.more .ar { border-width: 5px 4px 0; }
.share { gap: 5px; margin-left: 4px; color: #6db3ec; }
.name { flex: 1; display: flex; justify-content: center; gap: 16px; color: #ccd0d7; padding-left: 4px; font-size: 13px; }
.rt { border: 4px solid transparent; border-left: 5px solid #d5d8dd; border-right: 0; margin: 0 8px; }
.find { width: 202px; height: 24px; background: #434b5c; padding: 0 2px; font-style: italic; }
.find::placeholder { color: #8e95a3; opacity: 1; }
.tb { gap: 5px; padding: 0 4px; }
.find-b { padding: 0 8px 0 5px; }
.user { padding: 0 5px 0 0; gap: 6px; }
.user .ar { margin-left: -5px; }
.vr { width: 1px; height: 22px; background: #454c5a; margin: 0 6px 0 9px; }
.wb { display: flex; gap: 15px; margin: 0 5px 0 76px; }

.menu { display: flex; align-items: center; height: 26px; padding: 2px 0 0 13px; gap: 23px; border-bottom: 1px solid #363e4b; font-size: 13px; color: #a3a9b4; }
.mdi { margin-left: auto; display: flex; align-items: center; gap: 7px; }
.tabs { display: flex; height: 27px; padding: 4px 0 0 4px; color: #a3a9b4; }
.tabs button { padding: 0 10px; }
.tabs .act { background: #3c4356; color: #e6e8eb; }
.tabs .cam { gap: 4px; margin-left: 26px; }

.ribbon {
  display: grid; height: 111px; background: #3c4356;
  grid-template-columns: 256fr 309fr 233fr 304fr 89fr 263fr 83fr 104fr 91fr 59fr;
}
.ribbon section { border-right: 2px solid #2c3340; display: flex; flex-direction: column; min-width: 0; }
.ribbon .last { border-right: 0; }
.ribbon footer { flex: 1; display: flex; justify-content: center; align-items: center; gap: 7px; position: relative; padding-top: 1px; }
.last footer { padding-right: 12px; }
.cn { position: absolute; right: 3px; top: 10px; }
.body { height: 86px; padding-top: 5px; display: flex; min-width: 0; }
.big { flex-direction: column; justify-content: flex-start; padding-top: 3px; text-align: center; flex: none; }
.big > svg { margin: 0 auto; height: 38px; }
.big span { margin-top: 2px; }
.big .ar { margin-top: 1px; }
.stack { display: grid; grid-template-rows: repeat(3, 27px); min-width: 0; align-content: start; }
.mid { justify-items: center; align-items: center; }
.s { gap: 5px; height: 27px; }
.s > .ar { margin-left: 5px; }
.draw .big { width: 50px; }
.draw .big:nth-child(2) { width: 54px; }
.draw .big:nth-child(3) { width: 60px; }
.draw .big:nth-child(4) { width: 48px; }
.draw .s svg { width: 20px; }
.draw .s > .ar { margin-left: 0; }
.mod { display: grid; grid-template: repeat(3, 27px) / 86px 86px 100px 1fr; padding-left: 6px; }
.ann { padding-left: 8px; }
.ann .big { width: 42px; }
.ann .big:nth-child(2) { width: 56px; }
.ann .s > .ar { margin-left: 2px; }
.lay .big { width: 64px; }
.lay .stack { flex: 1; }
.layer { margin: 2px 3px 2px 0; }
.layer .over { position: absolute; left: 5px; display: flex; align-items: center; gap: 4px; pointer-events: none; }
.layer select { padding-left: 88px; }
.over .sw { margin-left: 1px; }
.sw { display: inline-block; width: 15px; height: 15px; background: #fbf16f; border: 1px solid #2b303b; }
.lr { display: flex; }
.lr button { width: 27px; padding-left: 3px; gap: 4px; }
.blk .big { width: 48px; }
.blk .s { gap: 2px; }
.prp .big { width: 84px; }
.prp .mid { width: 21px; }
.sel { flex: 1; }
.sel .drop { margin: 2px 3px 2px 1px; }
.sel .c select { padding-left: 42px; background: linear-gradient(#fbf16f, #fbf16f) 13px 50% / 17px 17px no-repeat; }
.sel .l select { padding-left: 76px; background: linear-gradient(#c5c9d2, #c5c9d2) 2px 50% / 73px 1px no-repeat; }
.grp .big { width: 54px; }
.grp .s { width: 27px; justify-content: center; }
.grp .hot { background: #33567a; border: 2px solid #4a93c8; height: 26px; }
.utl .big { width: 74px; }
.pst .big { width: 62px; }
.vue { justify-content: center; }

.docs { display: flex; align-items: flex-end; height: 33px; border-bottom: 3px solid #3c4356; padding-left: 20px; }
.doc { height: 25px; width: 142px; padding-left: 15px; background: #2d3442; clip-path: polygon(8px 0, calc(100% - 8px) 0, 100% 100%, 0 100%); color: #a3a9b4; }
.doc.act { width: 144px; background: #3c4356; color: #e6e8eb; font-weight: 700; justify-content: space-between; padding: 0 17px 0 13px; }
.add { height: 22px; padding: 0 12px; font-size: 18px; color: #b5bac2; }

.work { flex: 1; display: flex; }
.props { width: 298px; flex: none; background: #3c4356; }
.props h2 { margin: 0; height: 23px; display: flex; align-items: center; gap: 7px; padding-left: 6px; background: #2f3543; font-size: 13px; font-weight: 400; color: #c8ccd4; }
.props .grip { width: 4px; height: 10px; background: repeating-linear-gradient(#8b919d 0 2px, transparent 2px 4px); }
.ptool { display: flex; align-items: center; padding: 14px 0 6px 20px; }
.ptool .drop { width: 183px; height: 25px; margin-right: 5px; }
.ptool button { width: 27px; justify-content: center; }
.plist { display: flex; gap: 11px; padding: 0 14px 18px 3px; }
.plist .bar { width: 5px; background: #2b3240; }
.tables { flex: 1; min-width: 0; display: flex; flex-direction: column; gap: 3px; }
table { border-collapse: collapse; width: 100%; table-layout: fixed; }
th, td { padding: 0; text-align: left; font-weight: 400; white-space: nowrap; line-height: 14px; }
thead th { height: 22px; background: #2d3340; font-weight: 700; color: #e6e8eb; }
.c1 { width: 20px; }
.c2 { width: 109px; }
.hd { display: flex; align-items: center; justify-content: space-between; padding: 0 9px 0 8px; }
tbody tr { height: 21px; }
tbody tr:nth-child(odd) { height: 22px; }
tbody th, tbody td { border: 1px solid #333a4a; padding: 0 0 1px 7px; color: #b4b9c3; font-size: 13px; }
tbody td { padding-left: 3px; color: #c8ccd4; font-size: 12px; }
tbody .gut { border: 0; }
tbody .dim { color: #858b97; }
td .sw { vertical-align: middle; margin: 0 6px 0 2px; }
.rule { display: inline-block; width: 60px; height: 1px; background: #c8ccd4; vertical-align: middle; margin-right: 5px; }

.canvas { flex: 1; position: relative; min-width: 0; background: #212733; overflow: hidden; }
.plan { position: absolute; inset: 0; }
.vp { position: absolute; left: 4px; top: 6px; color: #c8ccd4; font-size: 13px; }
.tip { position: absolute; left: 331px; top: 142px; height: 25px; width: 603px; display: flex; align-items: center; justify-content: space-between; padding: 0 4px 0 3px; background: #9c9b9c; border: 1px solid #b9b8b8; color: #26282d; font-size: 13px; white-space: nowrap; }
.ang { position: absolute; left: 607px; top: 245px; width: 33px; height: 20px; padding: 1px 3px; background: #fff; display: flex; color: #d23c3c; }
.ang input { width: 15px; height: 18px; background: #1270cf; color: #cfe6ff; }
.hist { position: absolute; left: 370px; bottom: 65px; font: 14px/18px "DejaVu Sans Mono", "Liberation Mono", monospace; color: #c4c6ca; display: grid; gap: 4px; }
.hist span { display: inline-block; padding: 0 2px; background: rgba(110, 112, 116, .72); border-radius: 2px; white-space: nowrap; }
.cmd { position: absolute; left: 301px; bottom: 2px; right: 300px; height: 60px; display: flex; align-items: flex-end; font: 14px/18px "DejaVu Sans Mono", "Liberation Mono", monospace; }
.dock { width: 62px; height: 31px; background: #262c38; display: flex; align-items: center; justify-content: space-between; padding: 0 6px 0 8px; }
.dock .grip { width: 2px; height: 20px; background: repeating-linear-gradient(#8b919d 0 1px, transparent 1px 3px); }
.box { flex: 1; height: 60px; background: #fff; border-radius: 2px; color: #3a3c40; padding: 3px; white-space: nowrap; overflow: hidden; }
.box > div { display: flex; align-items: center; height: 18px; }
.arc { gap: 3px; }
.arc .ar { border-width: 5px 4px 0; border-top-color: #555; }
.arc b { margin-left: 4px; }
.ln { justify-content: space-between; }
.up { border: 4px solid transparent; border-bottom: 5px solid #777; border-top: 0; }
.box button { background: #d3d3d3; border-radius: 3px; height: 18px; }
.box .second { margin-left: 6px; }
.box em { font-style: normal; color: #3a35e8; }
.nav { position: absolute; right: 3px; top: 3px; width: 35px; height: 306px; background: #5a646b; border-radius: 4px; }

.status { display: flex; justify-content: space-between; height: 33px; border-top: 1px solid #333b49; }
.lts { display: flex; padding-left: 13px; height: 18px; color: #a3a9b4; }
.lts button { padding: 0 10px; margin-right: 2px; background: #2d3442; clip-path: polygon(0 0, 100% 0, calc(100% - 7px) 100%, 7px 100%); }
.lts .act { padding: 0 12px; background: #3c4356; color: #e6e8eb; font-weight: 700; }
.lts .pl { font-size: 16px; padding: 0 10px; }
.sb { display: flex; gap: 3px; padding: 0 3px 0 0; }
.g { display: flex; height: 27px; background: #3a4152; }
.g.tight { margin-left: -2px; }
.g button { width: 26px; justify-content: center; }
.g .on { background: #5489c4; }
.g .a { width: 20px; }
.g .n { width: 19px; }
.g .obj { width: 46px; }
.g .sc { width: 40px; gap: 4px; }
.g .ar { border-width: 5px 4px 0; }
</style>
